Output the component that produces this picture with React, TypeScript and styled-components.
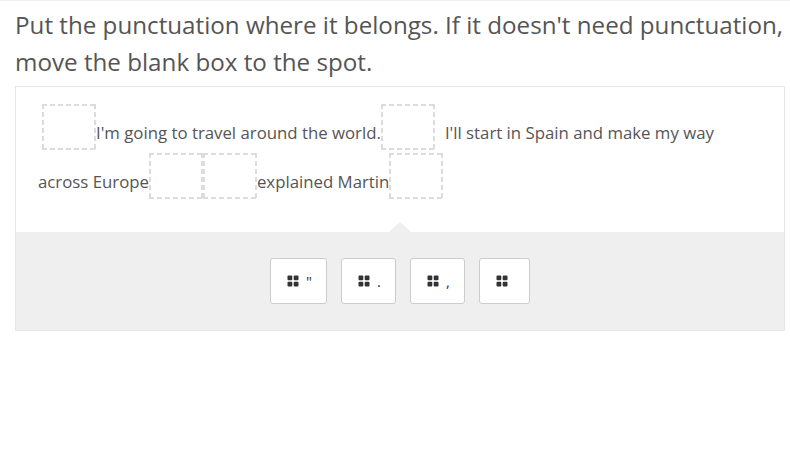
import styled, { createGlobalStyle } from "styled-components";

const GlobalStyle = createGlobalStyle`
  body {
    margin: 0;
    background: #fff;
    font-family: "Open Sans", "Noto Sans", sans-serif;
    color: #555;
  }
`;

const Page = styled.div`
  border-top: 1px solid #eeeeee;
  padding: 5px 5px 0 15px;
`;

const Prompt = styled.h1`
  margin: 0 0 6px;
  font-size: 24.2px;
  font-weight: 400;
  line-height: 37px;
  color: #555;
  white-space: nowrap;
`;

const Card = styled.div`
  border: 1px solid #e6e6e6;
`;

const Sentence = styled.div`
  position: relative;
  display: flex;
  flex-wrap: wrap;
  align-items: center;
  row-gap: 3px;
  padding: 17px 22px 33px;
  background: #fff;

  &::after {
    /* little notch pointing at the sentence */
    content: "";
    position: absolute;
    left: 50%;
    bottom: 0;
    margin-left: -11px;
    border: 11px solid transparent;
    border-bottom: 10px solid #efefef;
    border-top: 0;
  }
`;

const Words = styled.span<{ $lead?: number }>`
  font-size: 16.8px;
  line-height: 24px;
  margin-top: 11px;
  padding-left: ${(p) => p.$lead ?? 0}px;
  white-space: nowrap;
`;

const dash = "#dcdcdc 0 5px, transparent 5px 8px";

const Slot = styled.span<{ $first?: boolean }>`
  display: inline-block;
  width: 54px;
  height: 46px;
  margin-left: ${(p) => (p.$first ? 4 : 0)}px;
  background:
    repeating-linear-gradient(90deg, ${dash}) top left / 100% 2px no-repeat,
    repeating-linear-gradient(90deg, ${dash}) bottom left / 100% 2px no-repeat,
    repeating-linear-gradient(180deg, ${dash}) top left / 2px 100% no-repeat,
    repeating-linear-gradient(180deg, ${dash}) top right / 2px 100% no-repeat;
`;

const Tray = styled.div`
  display: flex;
  justify-content: center;
  gap: 14px;
  padding: 26px 0;
  background: #efefef;
`;

const Chip = styled.button`
  display: flex;
  align-items: center;
  box-sizing: border-box;
  height: 46px;
  padding: 0 14px 0 16px;
  border: 1px solid #cccccc;
  border-radius: 3px;
  background: #fff;
  font-family: "Open Sans", "Noto Sans", sans-serif;
  font-size: 15px;
  color: #333;
  cursor: grab;
`;

const Mark = styled.span`
  margin-left: 7px;
  line-height: 1;
`;

const Grip = () => (
  <svg width="12" height="12" viewBox="0 0 12 12">
    <rect x="0.5" y="0.5" width="4.8" height="4.8" rx="1" fill="#333" />
    <rect x="6.7" y="0.5" width="4.8" height="4.8" rx="1" fill="#333" />
    <rect x="0.5" y="6.7" width="4.8" height="4.8" rx="1" fill="#333" />
    <rect x="6.7" y="6.7" width="4.8" height="4.8" rx="1" fill="#333" />
  </svg>
);

const marks = ['"', ".", ",", ""];

function App() {
  return (
    <>
      <GlobalStyle />
      <Page>
        <Prompt>
          Put the punctuation where it belongs. If it doesn't need punctuation,
          <br />
          move the blank box to the spot.
        </Prompt>
        <Card>
          <Sentence>
            <Slot $first />
            <Words>I'm going to travel around the world.</Words>
            <Slot />
            <Words $lead={10}>I'll start in Spain and make my way</Words>
            <Words>across Europe</Words>
            <Slot />
            <Slot />
            <Words>explained Martin</Words>
            <Slot />
          </Sentence>
          <Tray>
            {marks.map((m, i) => (
              <Chip key={i}>
                <Grip />
                <Mark>{m}</Mark>
              </Chip>
            ))}
          </Tray>
        </Card>
      </Page>
    </>
  );
}

export default App;
